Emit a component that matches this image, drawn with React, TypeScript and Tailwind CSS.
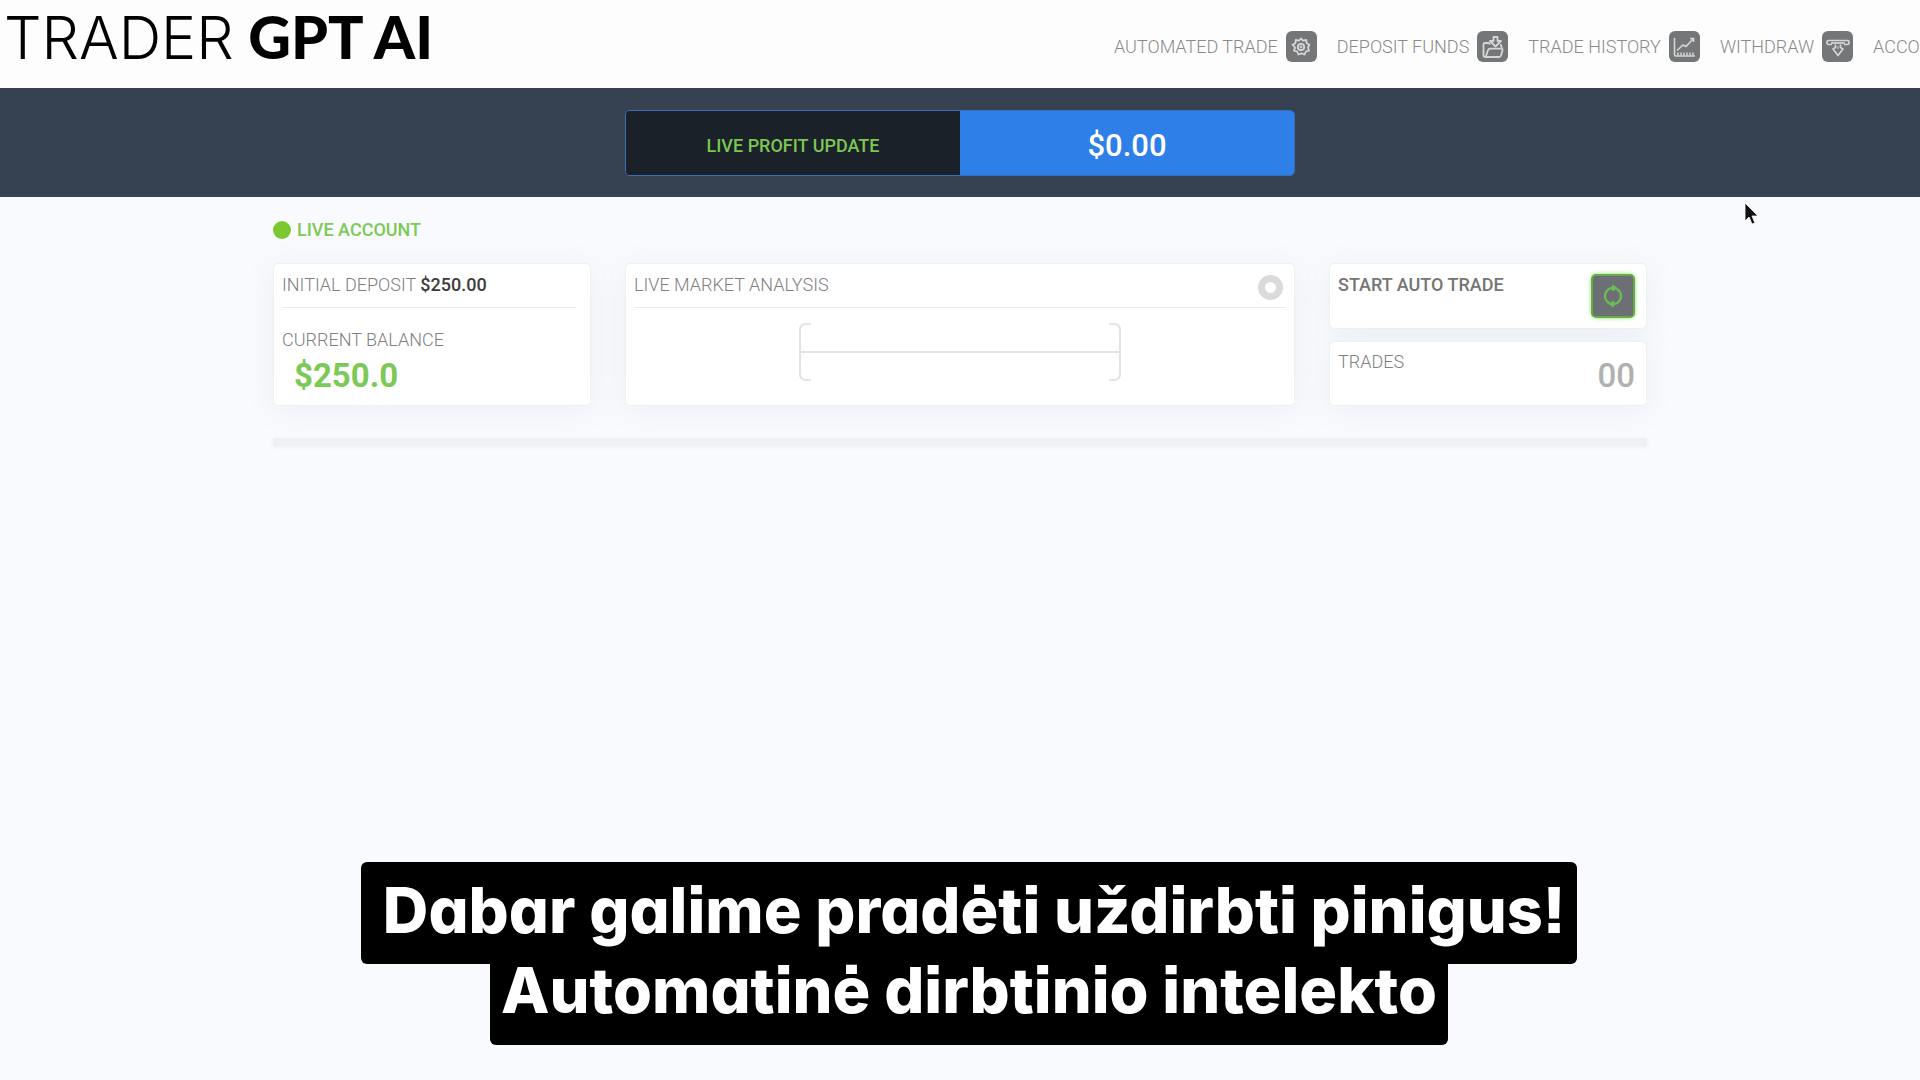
import React, { useState } from "react";

const GearIcon = () => (
  <svg className="h-5 w-5" viewBox="0 0 20 20" fill="none" stroke="currentColor" strokeWidth="1.8" strokeLinejoin="round">
    <path d="M10 1.500l2 2.200 3.300-.7.300 3.200 2.900 1.500-1.600 2.800 1.100 3.100-3.100.9-1.300 3-3.100-1.100-3.100 1.100-1.300-3-3.100-.9 1.100-3.100L1.500 7.700l2.900-1.500.3-3.200 3.300.7z" />
    <circle cx="10" cy="10" r="3.200" />
    <circle cx="10" cy="10" r="0.5" />
  </svg>
);

const DepositIcon = () => (
  <svg className="h-6 w-6" viewBox="0 0 24 24" fill="none" stroke="currentColor" strokeWidth="1.8" strokeLinejoin="round">
    <path d="M12.500 2h4v4h3.500l-5.500 5.500L9 6h3.500z" />
    <path d="M9 9.500l-1-1.500H4Q2.500 8 2.500 9.500V20q0 2 2 2h13.500q1.500 0 2-1.500l1.500-5q.4-1.800-1.500-1.800H9q-1.500 0-2 1.500L5 21" />
    <path d="M19 10q1.500 0 1.500 1.500v2" />
  </svg>
);

const HistoryIcon = () => (
  <svg className="h-6 w-6" viewBox="0 0 24 24" fill="none" stroke="currentColor" strokeWidth="1.6">
    <path d="M2.500 3v16.500q0 1.500 1.500 1.500h19" />
    <path d="M6 20.500v-3M9 20.500v-3M12 20.500v-3M15 20.500v-3M18 20.500v-3M21 20.500v-3" strokeWidth="1.500" />
    <path d="M5 15.500l6-5.500 3 1.500 7-7.500M18 3.500h3.500V7" />
  </svg>
);

const WithdrawIcon = () => (
  <svg className="h-6 w-6" viewBox="0 0 24 24" fill="none" stroke="currentColor" strokeWidth="1.7" strokeLinejoin="round">
    <path d="M6 9.500H2.500Q1 9.500 1 8V7q0-1.500 1.500-1.500h19Q23 5.500 23 7v1q0 1.500-1.500 1.500H18" />
    <path d="M5 8h14" />
    <path d="M9.500 9.500v3L7 14l5 6.500 5-6.500-2.500-1.500v-3" />
    <path d="M12 11v3" strokeWidth="1" />
  </svg>
);

const navItems = [
  { label: "AUTOMATED TRADE", icon: <GearIcon /> },
  { label: "DEPOSIT FUNDS", icon: <DepositIcon /> },
  { label: "TRADE HISTORY", icon: <HistoryIcon /> },
  { label: "WITHDRAW", icon: <WithdrawIcon /> },
  { label: "ACCOUNT", icon: null },
];

function Header() {
  return (
    <header className="flex h-[88px] items-start justify-between overflow-hidden bg-[#fdfdfd]">
      <a href="#" className="pt-1 pl-1 text-[59px] leading-[66px] whitespace-nowrap text-black">
        <span className="font-['Inter'] font-light">TRADER</span>{" "}
        <span className="font-['Lato'] font-black">GPT AI</span>
      </a>
      <nav className="flex w-[806px] shrink-0 items-center gap-5 pt-[31px]">
        {navItems.map((item) => (
          <a key={item.label} href="#" className="flex shrink-0 items-center gap-2 text-[18px] leading-[31px] font-light text-[#8a8a8a]">
            {item.label}
            {item.icon && (
              <span className="flex h-[31px] w-[31px] items-center justify-center rounded-md bg-[#747677] text-[#d4d6d8]">
                {item.icon}
              </span>
            )}
          </a>
        ))}
      </nav>
    </header>
  );
}

function ProfitBar() {
  return (
    <section className="flex h-[109px] items-center justify-center bg-[#364252]">
      <div className="grid h-[66px] w-[670px] grid-cols-2 overflow-hidden rounded-[5px] border border-[#3c6fb8] text-center leading-[69px]">
        <div className="bg-[#1b2129] text-[18px] font-medium text-[#7cc653]">LIVE PROFIT UPDATE</div>
        <div className="bg-[#2e80e8] text-[31px] font-medium text-white">$0.00</div>
      </div>
    </section>
  );
}

const cardClass = "rounded-[5px] border border-[#eef1f4] bg-white shadow-[0_4px_30px_rgba(90,130,130,0.09)]";

function Dashboard() {
  const [running, setRunning] = useState(false);

  return (
    <main className="mx-auto w-[1374px] max-w-full pt-[22px]">
      <div className="flex items-center gap-[6px] text-[18px] leading-[22px] font-medium text-[#7cc956]">
        <span className="h-[18px] w-[18px] rounded-full bg-[#7bc832]" />
        LIVE ACCOUNT
      </div>

      <div className="mt-[22px] grid grid-cols-[318fr_670fr_318fr] gap-[34px] text-[18px] leading-[22px] text-[#808080]">
        <section className={`${cardClass} h-[143px] px-2 pt-[10px]`}>
          <p className="mr-[6px] border-b border-[#ececec] pb-[11px] font-light">
            INITIAL DEPOSIT <span className="font-medium text-[#3c3c3c]">$250.00</span>
          </p>
          <h2 className="mt-[21px] font-light">CURRENT BALANCE</h2>
          <p className="ml-3 text-[33px] leading-[50px] font-bold text-[#7cc956]">$250.0</p>
        </section>

        <section className={`${cardClass} px-2 pt-[10px]`}>
          <div className="flex items-start justify-between border-b border-[#ececec] pb-[11px] font-light">
            <h2>LIVE MARKET ANALYSIS</h2>
            <span className="mt-[1px] mr-[3px] -mb-1 h-[25px] w-[25px] rounded-full border-[7px] border-[#dadada]" />
          </div>
          <svg className="mx-auto mt-[14px] block h-[60px] w-[322px]" viewBox="0 0 322 60" fill="none" stroke="#e2e3e4" strokeWidth="2">
            <path d="M12 2H7q-6 0-6 6v44q0 6 6 6h5M310 2h5q6 0 6 6v44q0 6-6 6h-5" />
            <path d="M1 30h320" />
          </svg>
        </section>

        <div className="flex flex-col gap-3">
          <section className={`${cardClass} flex h-[66px] justify-between pt-[10px] pr-[11px] pl-2`}>
            <h2 className="font-medium text-[#757575]">START AUTO TRADE</h2>
            <button
              type="button"
              aria-label="Start auto trade"
              onClick={() => setRunning(!running)}
              className="flex h-11 w-11 items-center justify-center rounded-[5px] border-2 border-[#69a94e] bg-[#6c6f73] text-[#69bd55] shadow-[0_0_4px_#8be05f]"
            >
              <svg className="h-6 w-6" viewBox="0 0 24 24" fill="none" stroke="currentColor" strokeWidth="2.4">
                <path d="M8.500 19.200A8 8 0 0 1 12 4M15.500 4.800A8 8 0 0 1 12 20" />
                <path d="M11.500 1l4.500 3-4.500 3zM12.500 17L8 20l4.500 3z" fill="currentColor" strokeWidth="1" />
              </svg>
            </button>
          </section>
          <section className={`${cardClass} flex h-[65px] justify-between pt-[9px] pr-[11px] pl-2`}>
            <h2 className="font-light">TRADES</h2>
            <p className="text-[33px] leading-[50px] font-medium text-[#b0b0b0]">00</p>
          </section>
        </div>
      </div>

      <div className="mt-[32px] h-2 bg-[#eef0f3] shadow-[0_2px_4px_#f0f2f4]" />
    </main>
  );
}

export default function App() {
  return (
    <div className="relative min-h-screen overflow-hidden bg-[#f9fafe] font-['Roboto','Liberation_Sans',sans-serif]">
      <Header />
      <ProfitBar />
      <Dashboard />

      {/* pointer */}
      <svg className="absolute top-[202px] left-[1744px] h-[24px] w-[15px]" viewBox="0 0 15 24">
        <path d="M1 1v18l4-4 3 7 3-1-3-7h6z" fill="#111" stroke="#fff" strokeWidth="0.8" />
      </svg>

      {/* subtitles */}
      <div className="absolute inset-x-0 bottom-[35px] flex flex-col items-center pl-[18px] text-center font-['Inter'] text-[63px] font-extrabold whitespace-nowrap text-white [font-feature-settings:'cv11','ss07']">
        <p className="w-[1216px] rounded-md bg-black pb-[6px] pl-[10px] leading-[96px]">Dabar galime pradėti uždirbti pinigus!</p>
        <p className="w-[958px] rounded-b-md bg-black pb-7 leading-[53px]">Automatinė dirbtinio intelekto</p>
      </div>
    </div>
  );
}
